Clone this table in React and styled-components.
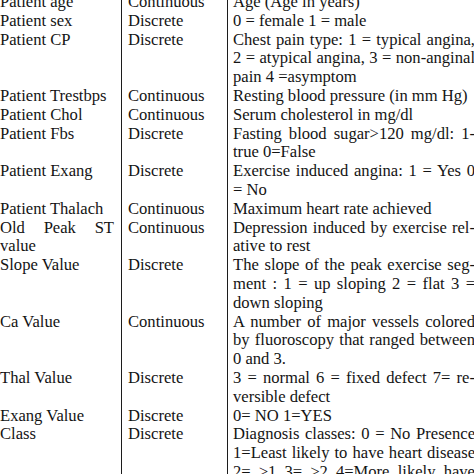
import React from 'react';
import styled, { createGlobalStyle } from 'styled-components';

const Global = createGlobalStyle`
  html, body { margin: 0; padding: 0; background: #fff; overflow: hidden; }
  body { width: 474px; height: 474px; }
`;

const Table = styled.div`
  display: grid;
  grid-template-columns: 122px 106px 247px;
  margin-top: -7px;
  font-family: "Liberation Serif", "Times New Roman", serif;
  font-size: 16.6px;
  line-height: 18.8px;
  color: #141414;
  width: 475px;
`;

const Cell = styled.div`
  box-sizing: border-box;
  padding: ${p => p.$pad};
  border-right: ${p => (p.$ruled ? '1px solid #1c1c1c' : 'none')};
  min-width: 0;
`;

const Line = styled.span`
  display: block;
  white-space: nowrap;
  text-align: ${p => (p.$justify ? 'justify' : 'left')};
  text-align-last: ${p => (p.$justify ? 'justify' : 'left')};
`;

const rows = [
  { name: ['Patient age'], type: 'Continuous', desc: ['Age (Age in years)'] },
  { name: ['Patient sex'], type: 'Discrete', desc: ['0 = female 1 = male'] },
  { name: ['Patient CP'], type: 'Discrete', desc: ['Chest pain type: 1 = typical angina,', '2 = atypical angina, 3 = non-anginal', 'pain 4 =asymptom'] },
  { name: ['Patient Trestbps'], type: 'Continuous', desc: ['Resting blood pressure (in mm Hg)'] },
  { name: ['Patient Chol'], type: 'Continuous', desc: ['Serum cholesterol in mg/dl'] },
  { name: ['Patient Fbs'], type: 'Discrete', desc: ['Fasting blood sugar>120 mg/dl: 1-', 'true 0=False'] },
  { name: ['Patient Exang'], type: 'Discrete', desc: ['Exercise induced angina: 1 = Yes 0', '= No'] },
  { name: ['Patient Thalach'], type: 'Continuous', desc: ['Maximum heart rate achieved'] },
  { name: ['Old Peak ST', 'value'], type: 'Continuous', desc: ['Depression induced by exercise rel-', 'ative to rest'] },
  { name: ['Slope Value'], type: 'Discrete', desc: ['The slope of the peak exercise seg-', 'ment : 1 = up sloping 2 = flat 3 =', 'down sloping'] },
  { name: ['Ca Value'], type: 'Continuous', desc: ['A number of major vessels colored', 'by fluoroscopy that ranged between', '0 and 3.'] },
  { name: ['Thal Value'], type: 'Discrete', desc: ['3 = normal 6 = fixed defect 7= re-', 'versible defect'] },
  { name: ['Exang Value'], type: 'Discrete', desc: ['0= NO 1=YES'] },
  { name: ['Class'], type: 'Discrete', desc: ['Diagnosis classes: 0 = No Presence', '1=Least likely to have heart disease', '2= \u22651 3= \u22652 4=More likely have', 'heart disease'] },
];

const Lines = ({ items }) =>
  items.map((t, i) => (
    <Line key={i} $justify={i < items.length - 1}>
      {t}
    </Line>
  ));

export default function App() {
  return (
    <>
      <Global />
      <Table>
        {rows.map((r, i) => (
          <React.Fragment key={i}>
            <Cell $ruled $pad="0 7px 0 0">
              <Lines items={r.name} />
            </Cell>
            <Cell $ruled $pad="0 5px 0 6px">
              <Lines items={[r.type]} />
            </Cell>
            <Cell $pad="0 0 0 5px">
              <Lines items={r.desc} />
            </Cell>
          </React.Fragment>
        ))}
      </Table>
    </>
  );
}
